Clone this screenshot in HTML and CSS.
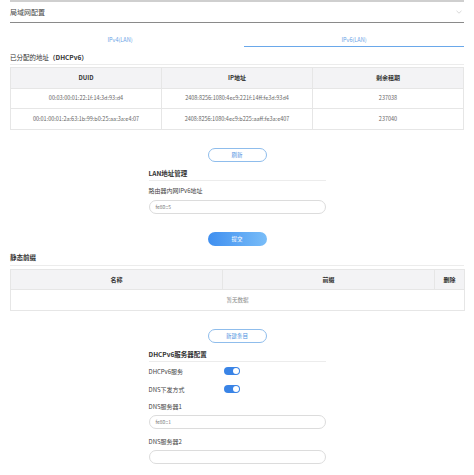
FILE: index.html
```html
<!DOCTYPE html>
<html lang="zh-CN">
<head>
<meta charset="utf-8">
<title>局域网配置</title>
<link rel="stylesheet" href="styles.css">
</head>
<body>
<div class="page">
  <div class="topbar"></div>
  <div class="header">
    <span class="title">局域网配置</span>
    <svg class="chevron" width="6" height="4" viewBox="0 0 6 4"><polyline points="0.5,0.8 3,3.2 5.5,0.8" fill="none" stroke="#c0c0c0" stroke-width="0.6"/></svg>
  </div>
  <div class="tabs">
    <div class="tab">IPv4(LAN)</div>
    <div class="tab active">IPv6(LAN)</div>
  </div>

  <div class="section-title">已分配的地址<b>（DHCPv6）</b></div>
  <table class="grid leases">
    <thead>
      <tr><th>DUID</th><th>IP地址</th><th>剩余租期</th></tr>
    </thead>
    <tbody>
      <tr><td>00:03:00:01:22:1f:14:3d:93:d4</td><td>2408:8256:1080:4ec9:221f:14ff:fe3d:93d4</td><td>237038</td></tr>
      <tr><td>00:01:00:01:2a:63:1b:99:b0:25:aa:3a:e4:07</td><td>2408:8256:1080:4ec9:b225:aaff:fe3a:e407</td><td>237040</td></tr>
    </tbody>
  </table>
  <div class="btn-row first"><button class="btn outline">刷新</button></div>

  <div class="form">
    <div class="form-title">LAN地址管理</div>
    <div class="label lan">路由器内网IPv6地址</div>
    <div class="input">fe80::5</div>
  </div>
  <div class="btn-row"><button class="btn solid">提交</button></div>

  <div class="section-title static">静态前缀</div>
  <table class="grid prefixes">
    <thead>
      <tr><th class="c-name">名称</th><th class="c-prefix">前缀</th><th class="c-del">删除</th></tr>
    </thead>
    <tbody>
      <tr><td colspan="3" class="empty">暂无数据</td></tr>
    </tbody>
  </table>
  <div class="btn-row"><button class="btn outline">新建条目</button></div>

  <div class="form">
    <div class="form-title dhcp">DHCPv6服务器配置</div>
    <div class="switch-row"><span>DHCPv6服务</span><span class="toggle"></span></div>
    <div class="switch-row"><span>DNS下发方式</span><span class="toggle"></span></div>
    <div class="field">
      <div class="label">DNS服务器1</div>
      <div class="input">fe80::1</div>
    </div>
    <div class="field">
      <div class="label">DNS服务器2</div>
      <div class="input"></div>
    </div>
  </div>
</div>
</body>
</html>
```

FILE: styles.css
```css
* { box-sizing: border-box; }
html, body { margin: 0; padding: 0; background: #fff; }
body {
  font-family: "Noto Sans CJK SC", "Noto Sans", sans-serif;
  color: #333;
  font-size: 6.5px;
}
.page { padding: 0 10px; }
.topbar { height: 2px; background: #cfcfcf; }
.header {
  height: 21px;
  display: flex;
  align-items: center;
  justify-content: space-between;
  border-bottom: 1px solid #8a8a8a;
  padding-right: 2px;
}
.title { font-size: 7px; color: #444; line-height: 10px; }
.chevron { display: block; }

.tabs {
  display: grid;
  grid-template-columns: 220px 220px;
  column-gap: 14px;
  height: 24px;
}
.tab {
  display: flex;
  align-items: flex-end;
  justify-content: center;
  padding-bottom: 2px;
  line-height: 8px;
  font-size: 5.5px;
  color: #6aa3e6;
  border-bottom: 1px solid transparent;
}
.tab.active { border-bottom-color: #6aa8ea; }

.section-title {
  padding-top: 5px;
  padding-bottom: 2px;
  line-height: 10px;
  font-size: 6.5px;
  color: #333;
  border-bottom: 1px solid #ececec;
}
.section-title b { font-weight: 700; }
.section-title.static { padding-top: 6px; padding-bottom: 3px; font-weight: 700; }

.grid {
  width: 100%;
  border-collapse: collapse;
  table-layout: fixed;
  margin-top: 2px;
  font-size: 5.5px;
}
.grid th, .grid td {
  border: 1px solid #e6e6e6;
  height: 20.5px;
  padding: 0;
  text-align: center;
  vertical-align: middle;
}
.grid th { background: #f3f3f5; font-weight: 700; color: #333; font-size: 6px; }
.grid td { color: #666; }
.prefixes { margin-top: 3px; }
.c-name, .c-prefix { width: 212px; }
.c-del { width: 30px; }
.grid td.empty { height: 21px; color: #888; }

.btn-row { display: flex; justify-content: center; margin-top: 18px; }
.btn {
  width: 59px;
  height: 14px;
  border-radius: 7px;
  font-family: inherit;
  font-size: 5.5px;
  padding: 0;
  line-height: 12px;
}
.btn.outline { background: #fff; border: 1px solid #8fbdec; color: #4b8fe0; }
.btn.solid {
  border: none;
  color: #fff;
  background: linear-gradient(90deg, #3f8ff0, #79bdf8);
}

.form { width: 177px; margin: 0 auto; }
.form-title {
  margin-top: 6px;
  padding-bottom: 2px;
  line-height: 10px;
  font-size: 6.5px;
  font-weight: 700;
  color: #333;
  border-bottom: 1px solid #ececec;
}
.form-title.dhcp { margin-top: 6px; }
.label { line-height: 8px; font-size: 6px; color: #444; }
.label.lan { margin-top: 6px; }
.input {
  margin-top: 5px;
  height: 14px;
  border: 1px solid #dcdcdc;
  border-radius: 7px;
  padding-left: 6px;
  line-height: 12px;
  font-size: 5px;
  color: #777;
}
.switch-row {
  display: grid;
  grid-template-columns: 75px auto;
  align-items: center;
  height: 18px;
  font-size: 6px;
  color: #444;
}
.toggle {
  position: relative;
  display: block;
  width: 16px;
  height: 8px;
  border-radius: 4px;
  background: #3a84e6;
}
.toggle::after {
  content: "";
  position: absolute;
  right: 1px;
  top: 1px;
  width: 6px;
  height: 6px;
  border-radius: 50%;
  background: #fff;
}
.field .label { line-height: 17px; }
.field .input { margin-top: 0; }
.field + .field { margin-top: 4px; }
```
